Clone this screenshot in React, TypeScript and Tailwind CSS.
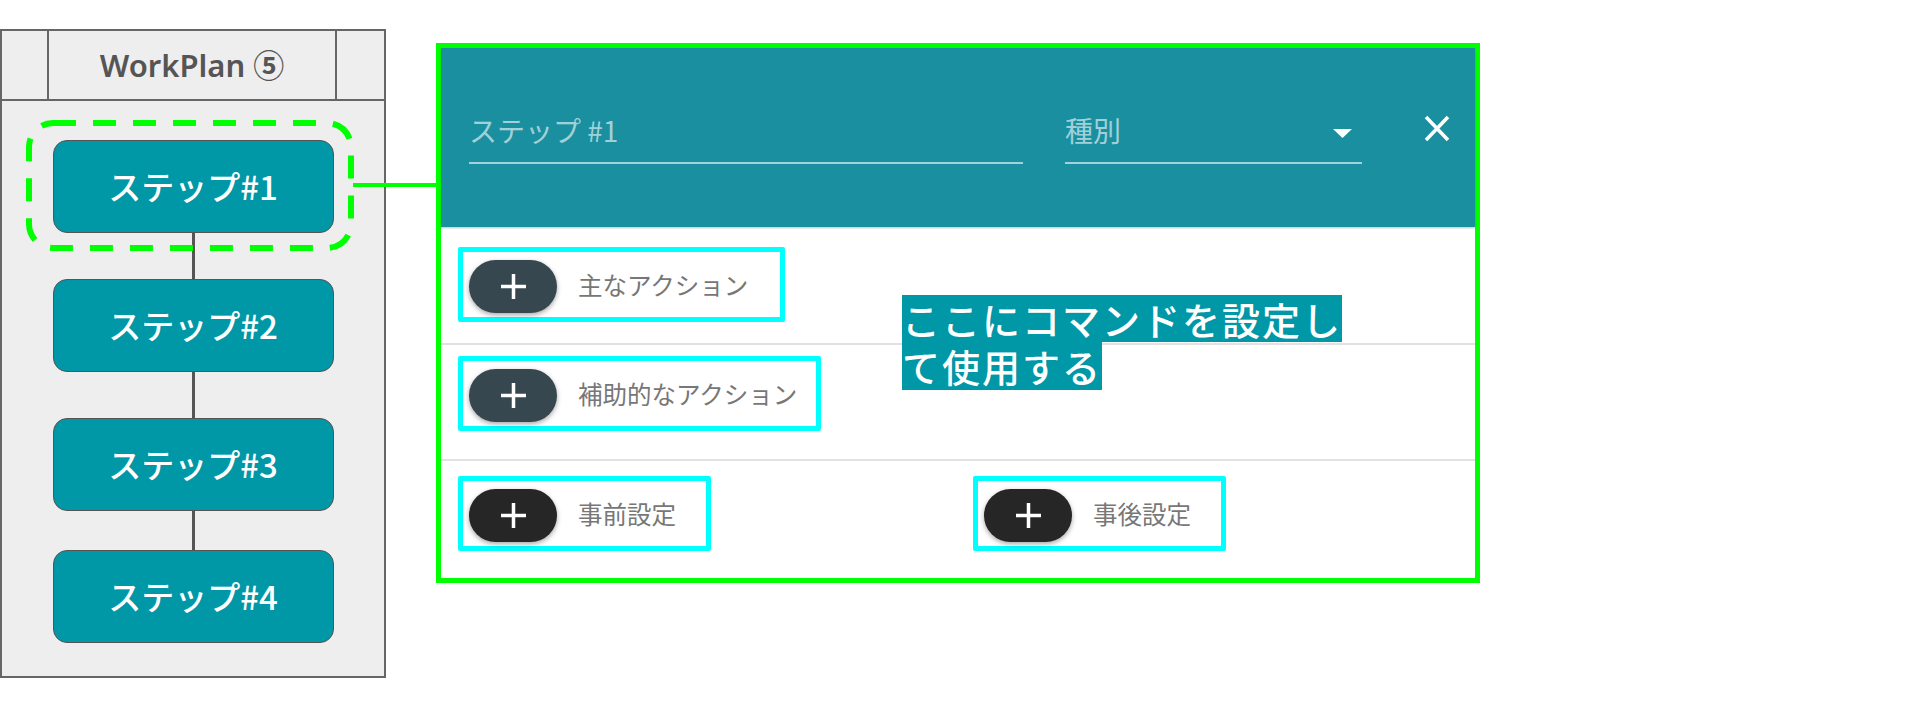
import React from "react";

const STEPS = [
  { id: 1, label: "ステップ#1", gap: 0 },
  { id: 2, label: "ステップ#2", gap: 46 },
  { id: 3, label: "ステップ#3", gap: 46 },
  { id: 4, label: "ステップ#4", gap: 39 },
];

function Plus() {
  return (
    <svg width="27" height="27" viewBox="0 0 27 27">
      <path d="M13.5 1v25M1 13.5h25" stroke="white" strokeWidth="3.5" fill="none" />
    </svg>
  );
}

function ActionButton({ label, dark, width }: { label: string; dark?: boolean; width: string }) {
  return (
    <div className={`${width} h-[75px] border-[5px] border-[#00ffff] rounded-[2px] pl-[6px] pt-[8px] pb-[4px] flex items-center`}>
      <div
        className={`w-[88px] h-[53px] rounded-full flex items-center justify-center shadow-[0_2px_5px_rgba(0,0,0,0.35)] ${
          dark ? "bg-[#262626]" : "bg-[#37474f]"
        }`}
      >
        <Plus />
      </div>
      <span className="ml-[21px] text-[24.5px] leading-none text-[#777] whitespace-nowrap">{label}</span>
    </div>
  );
}

export default function App() {
  return (
    <div className="relative w-[1920px] h-[708px] bg-white flex items-start overflow-hidden font-['Noto_Sans','Noto_Sans_CJK_JP',sans-serif]">
      {/* WorkPlan panel */}
      <div className="w-[386px] h-[649px] mt-[29px] border-2 border-[#666] bg-[#eeeeee] flex flex-col items-center">
        <div className="w-full h-[70px] border-b-2 border-[#666] flex">
          <div className="w-[47px] border-r-2 border-[#666]" />
          <div className="flex-1 flex items-center justify-center text-[31px] font-semibold text-[#555]">
            WorkPlan ⑤
          </div>
          <div className="w-[49px] border-l-2 border-[#666]" />
        </div>
        <div className="mt-[39px] flex flex-col items-center">
          {STEPS.map((s) => (
            <React.Fragment key={s.id}>
              {s.gap > 0 && <div className="w-[3px] bg-[#555]" style={{ height: s.gap }} />}
              <div className="w-[281px] h-[93px] rounded-[14px] border-[1.5px] border-[#555] bg-[#0097a7] flex items-center justify-center text-white text-[33px] font-medium font-['Noto_Sans_CJK_JP',sans-serif]">
                {s.label}
              </div>
            </React.Fragment>
          ))}
        </div>
      </div>

      {/* Step editor */}
      <div className="ml-[50px] mt-[43px] w-[1044px] h-[540px] border-[5px] border-[#00ff00] flex flex-col bg-white">
        <div className="h-[179px] bg-[#1a8fa0] flex items-start pl-[28px] pt-[64px] shadow-[0_1px_2px_rgba(0,0,0,0.25)] font-['Noto_Sans_CJK_JP',sans-serif]">
          <div className="w-[554px] border-b-2 border-white/60 pb-[14px] text-[28px] leading-[36px] text-white/60">
            ステップ #1
          </div>
          <div className="ml-[42px] w-[297px] border-b-2 border-white/60 pb-[14px] flex items-center justify-between text-[28px] leading-[36px] text-white/60">
            <span>種別</span>
            <svg width="19" height="9" viewBox="0 0 19 9" className="mr-[10px] translate-y-[3px]">
              <polygon points="0,0 19,0 9.5,9" fill="white" />
            </svg>
          </div>
          <svg width="26" height="27" viewBox="0 0 26 27" className="ml-[62px] mt-[3px]">
            <path d="M2 2l22 23M24 2L2 25" stroke="white" strokeWidth="3.5" fill="none" />
          </svg>
        </div>

        <div className="h-[118px] border-b-2 border-[#e2e2e2] pl-[17px] pt-[20px]">
          <ActionButton label="主なアクション" width="w-[327px]" />
        </div>
        <div className="h-[116px] border-b-2 border-[#e2e2e2] pl-[17px] pt-[11px]">
          <ActionButton label="補助的なアクション" width="w-[363px]" />
        </div>
        <div className="flex-1 grid grid-cols-2 pt-[15px]">
          <div className="pl-[17px]">
            <ActionButton label="事前設定" dark width="w-[253px]" />
          </div>
          <div className="pl-[15px]">
            <ActionButton label="事後設定" dark width="w-[253px]" />
          </div>
        </div>
      </div>

      {/* Annotations */}
      <svg className="absolute left-[26px] top-[120px]" width="330" height="132" viewBox="0 0 330 132">
        <rect x="3" y="3" width="322" height="125" rx="24" fill="none" stroke="#00ff00" strokeWidth="6" strokeDasharray="23 17" />
      </svg>
      <div className="absolute left-[353px] top-[183px] w-[84px] h-[4px] bg-[#00ff00]" />
      <div className="absolute left-[902px] top-[295px] flex flex-col items-start font-['Noto_Sans_CJK_JP',sans-serif] text-white text-[38px] font-medium tracking-[2px]">
        <div className="h-[47px] leading-[47px] bg-[#0097a7]">ここにコマンドを設定し</div>
        <div className="h-[48px] leading-[48px] bg-[#0097a7]">て使用する</div>
      </div>
    </div>
  );
}
